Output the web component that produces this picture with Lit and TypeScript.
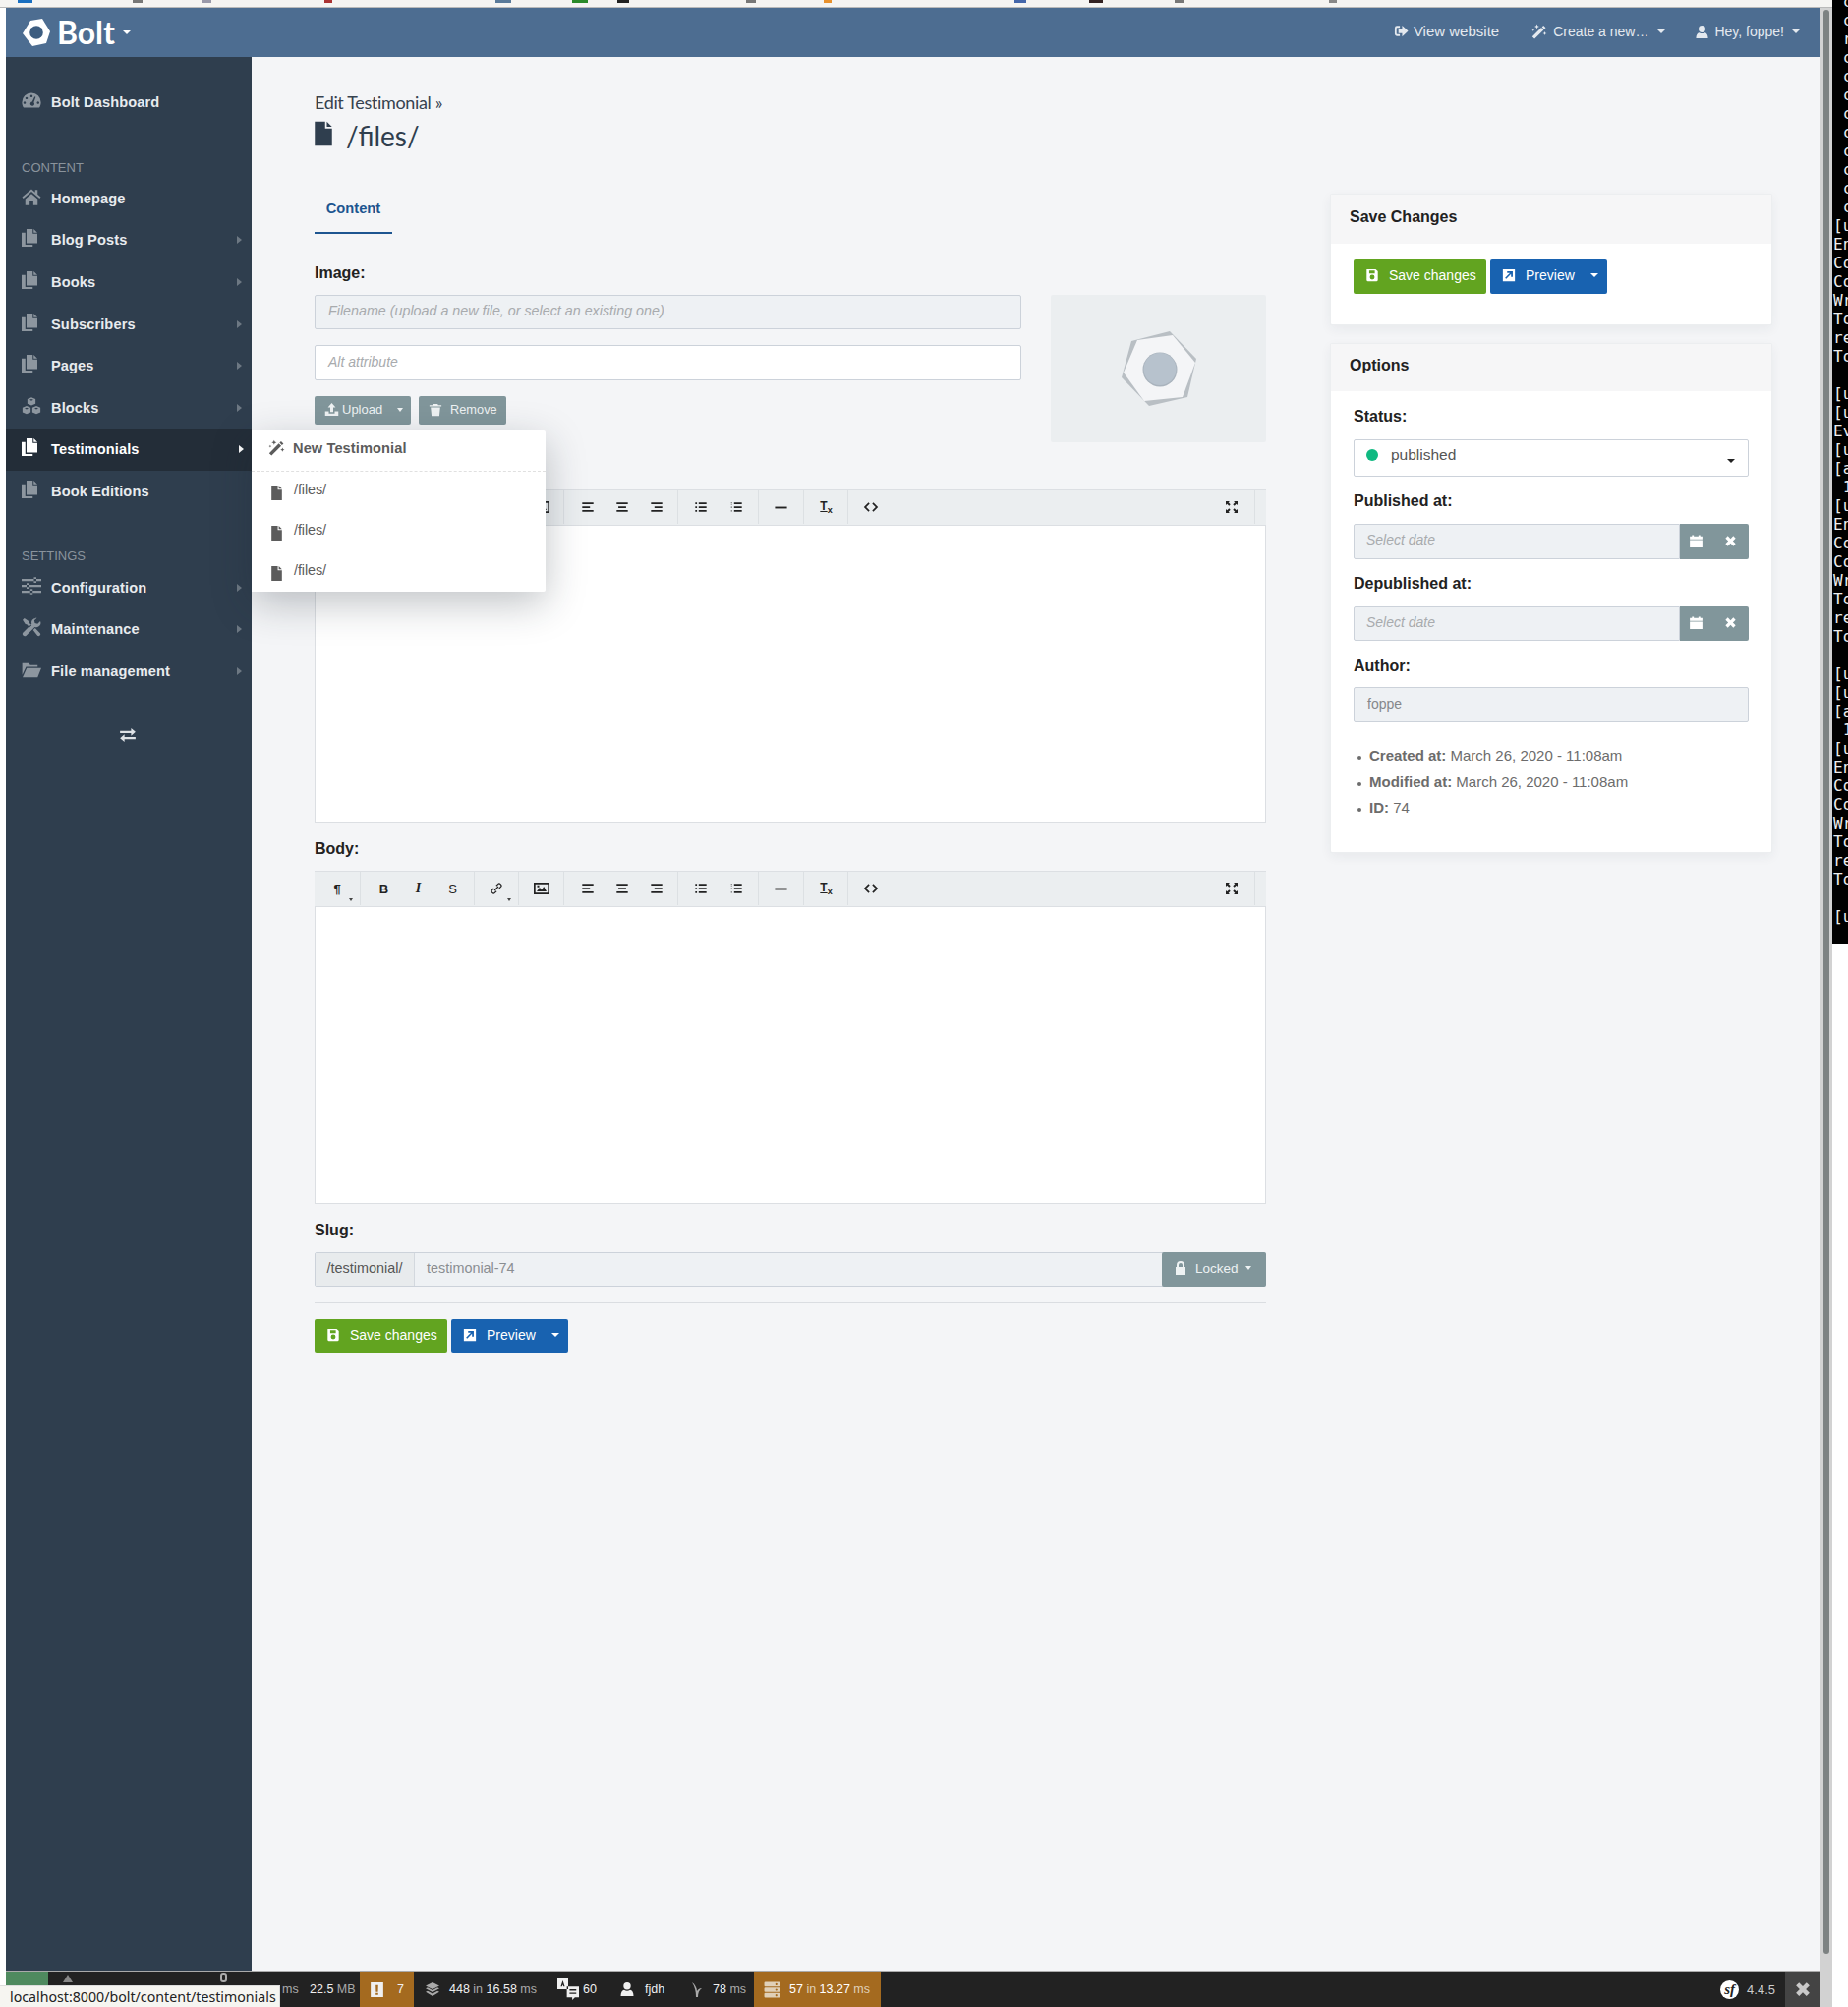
import { LitElement, html, css } from "lit";
import { customElement } from "lit/decorators.js";

const P: Record<string, string> = {
  file: "M3 1h6v4h4v10H3z M10 1l3 3h-3z",
  files: "M4 .8h5v3.700h3.800V12.400H4z M9.800 .8l3 3h-3z M0 3.700h3v9.800h6v1.700H0z",
  dash: "M8 2a7.7 7.7 0 0 0-7.700 7.700c0 1.600.5 3 1.300 4.300h12.800c.8-1.300 1.300-2.700 1.300-4.300A7.700 7.700 0 0 0 8 2z M8 3.600a1 1 0 1 0 .01 0z M4 5.300a1 1 0 1 0 .01 0z M2.400 9a1 1 0 1 0 .01 0z M13.400 9a1 1 0 1 0 .01 0z M10.600 5l-2 4.200a1.700 1.700 0 1 0 1.300.5l1.600-4.400z",
  home: "M8 2 .4 8.400l1 1.100L8 4l6.600 5.500 1-1.100L13 6.200V2.500h-2v2zM3 10l5-4.200 5 4.200v5H9.500v-3.600h-3V15H3z",
  cubes: "M8 1l3.300 1.300v3.900L8 7.600 4.700 6.200V2.300z M4 8l3.300 1.300v3.900L4 14.600.7 13.200V9.300z M12 8l3.300 1.300v3.900L12 14.600l-3.300-1.400V9.300z M8 2.400 6.400 3 8 3.700 9.600 3z M4 9.400 2.400 10l1.600.7 1.600-.7z M12 9.400l-1.600.6 1.600.7 1.600-.7z",
  sliders: "M0 2.300h16v1.800H0z M0 7.100h16v1.800H0z M0 11.900h16v1.800H0z M10 1h2v4.500h-2z M4 5.800h2v4.500H4z M7 10.500h2V15H7z",
  folder: "M.5 3h5l1.500 1.500h6V6H3.600L.5 12.500z M4.200 7H16l-3 7.500H.8z",
  exchange: "M1 4.200h10V1.800L15 5.200l-4 3.400V6.200H1z M15 9.800H5V7.400L1 10.800l4 3.400v-2.400h10z",
  wand: "M.8 13.300l9.200-9.200 2.300 2.300-9.200 9.200z M10.700 3.400l1.500-1.500 2.300 2.300-1.500 1.500z M5.500 .6l.7 1.700 1.700.7-1.700.7-.7 1.700-.7-1.700L3.100 3l1.700-.7z M13.500 8l.6 1.400 1.400.6-1.400.6-.6 1.400-.6-1.400-1.400-.6 1.400-.6z M1.800 5.300l.4 1 1 .4-1 .4-.4 1-.4-1-1-.4 1-.4z",
  upload: "M8 1l4.200 4.800H9.600V11H6.400V5.800H3.800z M.8 10h4v2.500h6.400V10h4v5H.8z",
  trash: "M5.500 1h5l.7 1.500H15V4H1V2.500h3.800z M2.500 5h11l-1 10h-9z",
  save: "M1.500 1H12l2.500 2.500v10.200A1.300 1.300 0 0 1 13.200 15H2.800a1.300 1.300 0 0 1-1.300-1.300z M4.500 2.500V6H11V2.500z M5.200 10.200a2.800 2.800 0 1 0 5.600 0 2.800 2.800 0 1 0-5.600 0z",
  ext: "M1 1h14v14H1z M6 3.500v1.900h3.200L3.600 11l1.300 1.300 5.600-5.600V10h2V3.500z",
  lock: "M4 7V5a4 4 0 0 1 8 0v2h1v8H3V7z M6 7h4V5a2 2 0 0 0-4 0z",
  cal: "M1.200 3H3.500V1.500h2V3h5V1.500h2V3h2.300v3H1.200z M1.200 7h13.600v8H1.200z",
  times: "M2.500 5l2.500-2.500 3 3 3-3L13.500 5l-3 3 3 3-2.500 2.500-3-3-3 3L2.500 11l3-3z",
  user: "M8 1a3.700 3.700 0 1 1 0 7.400A3.700 3.700 0 0 1 8 1z M1.500 15c0-4 1.500-6 3.500-6.300 1.800 1.300 4.200 1.300 6 0 2 .3 3.500 2.300 3.500 6.300z",
  signout: "M6.500 2.500H3.200A2.200 2.200 0 0 0 1 4.700v6.600a2.200 2.200 0 0 0 2.200 2.200h3.300v-2H3.400a.5.5 0 0 1-.5-.5V5a.5.5 0 0 1 .5-.5h3.100z M9 2l6.500 6L9 14v-3.500H5v-5h4z",
  stack: "M8 1l7 3.500L8 8 1 4.500z M1 7.200l2-.9L8 9l5-2.700 2 .9L8 11z M1 10.700l2-.9 5 2.700 5-2.700 2 .9L8 15z",
  tools: "M11.500 .8a3.500 3.500 0 0 0-3.300 4.600L1 12.600a1.800 1.800 0 0 0 2.500 2.500l7.200-7.200a3.500 3.500 0 0 0 4.500-4.700l-2.200 2.100-2.200-.6-.5-2.100 2.100-2.100a3.500 3.500 0 0 0-.9-.1z M.8 2.200 2.200.8 5.500 3l.3 1.200 2.300 2.300-1.600 1.600-2.300-2.300-1.200-.3z M9.300 10.400l1.700-1.700 4 4.200a1.500 1.500 0 0 1-2.100 2.100z",
  full: "M2 2h4L4.700 3.300l2 2-1.400 1.400-2-2L2 6z M14 2v4l-1.300-1.300-2 2-1.400-1.400 2-2L10 2z M2 14v-4l1.300 1.300 2-2 1.400 1.400-2 2L6 14z M14 14h-4l1.300-1.300-2-2 1.400-1.400 2 2L14 10z",
  alignL: "M1.500 2.500h13v2h-13z M1.500 7h9v2h-9z M1.500 11.500h13v2h-13z",
  alignC: "M1.500 2.500h13v2h-13z M3.500 7h9v2h-9z M1.500 11.500h13v2h-13z",
  alignR: "M1.500 2.500h13v2h-13z M5.500 7h9v2h-9z M1.500 11.500h13v2h-13z",
  ul: "M1.500 2.500h2v2h-2z M1.500 7h2v2h-2z M1.500 11.500h2v2h-2z M5.500 2.500h9v2h-9z M5.500 7h9v2h-9z M5.500 11.500h9v2h-9z",
  ol: "M2 2.500h1v1H2z M2 4.300h1v.7H2z M2 7h1v.8H2z M2 8.400h1v.8H2z M2 11.400h1v.8H2z M2 13h1v.8H2z M5.500 2.500h9v2h-9z M5.500 7h9v2h-9z M5.500 11.500h9v2h-9z",
  hr: "M1.500 7h13v2h-13z",
  code: "M5.500 3.200l1.200 1.200L3.200 8l3.500 3.600-1.200 1.200L.8 8z M10.500 3.200 15.200 8l-4.700 4.800-1.200-1.200L12.800 8 9.300 4.400z",
  image: "M0 2h16v12H0z M1.700 3.700v8.600h12.600V3.700z M3 11l3-4 2 2.500L10.200 6 13 11z M3.500 4.800h2v2h-2z",
  link: "M9.300 2.500a2.700 2.700 0 0 1 3.900 0l.3.3a2.700 2.700 0 0 1 0 3.900L11.600 8.600l-1-1 1.900-1.900a1.300 1.300 0 0 0 0-1.900l-.3-.3a1.300 1.300 0 0 0-1.900 0L8.400 5.400l-1-1z M4.400 7.400l1 1-1.900 1.900a1.300 1.300 0 0 0 0 1.900l.3.3a1.300 1.300 0 0 0 1.900 0l1.900-1.900 1 1-1.900 1.900a2.700 2.700 0 0 1-3.900 0l-.3-.3a2.700 2.700 0 0 1 0-3.900z M9.800 5.200l1 1-4.600 4.600-1-1z",
  server: "M1.500 .5h13a1 1 0 0 1 1 1V4a1 1 0 0 1-1 1h-13a1 1 0 0 1-1-1V1.500a1 1 0 0 1 1-1z M1.500 5.900h13a1 1 0 0 1 1 1v2.300a1 1 0 0 1-1 1h-13a1 1 0 0 1-1-1V6.900a1 1 0 0 1 1-1z M1.500 11.100h13a1 1 0 0 1 1 1v2.400a1 1 0 0 1-1 1h-13a1 1 0 0 1-1-1v-2.400a1 1 0 0 1 1-1z M12 1.700a1 1 0 1 0 .01 0z M12 7a1 1 0 1 0 .01 0z M12 12.300a1 1 0 1 0 .01 0z",
  translate: "M0 0h8v8H0z M2.500 6l1.500-4.500L5.500 6h-1L4 4.500 3.500 6z M7 6h9v8h-3l-2 2v-2H7z M9 8v1h5V8z M9 10.500v1h5v-1z",
  route: "M8 16c0-6-1-10-4-15 3 2 5 6 5 9 1-2 3-3 5-3-3 2-4 5-4 9z",
  warn: "M2 1h12v14H2z M6.800 3.500h2.400L9 10H7z M6.800 11h2.400v2H6.800z",
};

function ic(name: string, size = 16, cls = "") {
  return html`<svg class="i ${cls}" width=${size} height=${size} viewBox="0 0 16 16" aria-hidden="true"><path fill="currentColor" fill-rule="evenodd" d=${P[name]}></path></svg>`;
}

const termLines = [
  " c"," c"," r"," c"," c"," c"," c"," c"," c"," c"," c"," c",
  "[u","En","Co","Co","Wr","To","re","To","",
  "[u","[u","Ev","[u","[a"," 1","[u","En","Co","Co","Wr","To","re","To","",
  "[u","[u","[a"," 1","[u","En","Co","Co","Wr","To","re","To","","[u",
];

const topBits: [number, number, string][] = [
  [18, 15, "#1a6fc0"], [135, 10, "#777"], [205, 10, "#99a"], [330, 8, "#a33"],
  [504, 16, "#5a7a9a"], [582, 16, "#2a8a2a"], [628, 12, "#222"], [759, 10, "#777"],
  [838, 8, "#e8912d"], [1032, 12, "#4466aa"], [1108, 14, "#332222"], [1195, 10, "#777"], [1352, 8, "#888"],
];

const nav: [string, string, boolean, boolean][] = [
  ["home", "Homepage", false, false],
  ["files", "Blog Posts", true, false],
  ["files", "Books", true, false],
  ["files", "Subscribers", true, false],
  ["files", "Pages", true, false],
  ["cubes", "Blocks", true, false],
  ["files", "Testimonials", true, true],
  ["files", "Book Editions", false, false],
];
const nav2: [string, string, boolean, boolean][] = [
  ["sliders", "Configuration", true, false],
  ["tools", "Maintenance", true, false],
  ["folder", "File management", true, false],
];

@customElement("app-root")
export class AppRoot extends LitElement {
  static styles = css`
    :host { display: block; width: 1880px; height: 2042px; overflow: hidden; background: #fff; font-family: "Liberation Sans", Arial, sans-serif; color: #222; }
    * { box-sizing: border-box; }
    .i { display: block; flex: none; }
    .root { display: flex; height: 2042px; }
    .left { width: 1864px; display: flex; flex-direction: column; }
    .strip { height: 8px; flex: none; background: #f5f4f2; border-bottom: 1px solid #b9b9b9; position: relative; overflow: hidden; }
    .bit { position: absolute; top: 0; height: 3px; }
    .row { flex: 1; display: flex; min-height: 0; }
    .gutter { width: 6px; flex: none; }
    .center { width: 1846px; display: flex; flex-direction: column; }
    .track { width: 12px; flex: none; background: #d2d2d2; padding: 2px 3px 0; }
    .thumb { height: 1978px; background: #7d8282; border-radius: 3px; }
    .term { width: 16px; height: 960px; background: #000; color: #eee; font: 16px/19px "DejaVu Sans Mono", monospace; padding: 0 0 0 1px; overflow: hidden; white-space: pre; flex: none; }
    .term-in { margin-top: -8px; }
    .tl { height: 19px; }

    .navbar { height: 50px; flex: none; background: #4d6d91; display: flex; align-items: center; padding: 0 21px 0 17px; color: #e4e9ef; font-size: 14px; }
    .logo { display: flex; align-items: center; color: #fff; }
    .logo svg { margin-right: 7px; }
    .logotext { font: 700 32px/40px Lato, sans-serif; letter-spacing: -0.1px; }
    .caret { width: 0; height: 0; border-left: 4px solid transparent; border-right: 4px solid transparent; border-top: 4px solid currentColor; flex: none; }
    .logo .caret { margin-left: 8px; }
    .navr { margin-left: auto; display: flex; align-items: center; margin-top: -2px; }
    .nl { display: flex; align-items: center; gap: 5px; }
    .nl.a { margin-right: 33px; margin-top: -2px; font-size: 15px; }
    .nl.b { margin-right: 30px; gap: 6px; }
    .nl .caret { margin-left: 3px; }

    .body { flex: 1; display: flex; min-height: 0; background: #f4f5f7; }
    .side { width: 250px; flex: none; background: #2f3e4e; padding-top: 25px; color: #e8ebee; }
    .si { height: 42.600px; display: flex; align-items: center; padding: 0 10px 0 16px; font-size: 14.600px; font-weight: 700; letter-spacing: 0.12px; position: relative; }
    .si .ii { width: 30px; color: #8d969f; margin-top: -4px; }
    .si.on { background: #232d38; color: #fff; }
    .si.on .ii { color: #fff; }
    .arrow { width: 0; height: 0; margin-left: auto; border-top: 4.500px solid transparent; border-bottom: 4.500px solid transparent; border-left: 5px solid #6d7883; }
    .si.on .arrow { border-left-color: #fff; margin-right: -2px; }
    .sh { height: 20px; line-height: 20px; padding-left: 16px; font-size: 13px; color: #8a939c; }
    .sh.c { margin-top: 35px; margin-bottom: 0; }
    .sh.s { margin-top: 35px; margin-bottom: 0; }
    .swap { display: flex; justify-content: center; margin-top: 35px; color: #dfe3e7; padding-right: 3px; }

    .main { flex: 1; display: flex; padding: 36px 0 0 64px; position: relative; min-width: 0; }
    .col { width: 968px; flex: none; }
    .crumb { font: 400 18px/20px Lato, sans-serif; color: #36424f; letter-spacing: -0.35px; }
    .title { display: flex; align-items: center; height: 40px; margin-top: 4px; font: 400 28px/40px Lato, sans-serif; color: #2f3e4e; gap: 9px; }
    .title .i { margin-left: -5px; margin-top: -4px; }
    .tabs { margin-top: 30px; }
    .tab { width: 79px; height: 50px; text-align: center; line-height: 48px; font-weight: 700; font-size: 14.700px; color: #1d5590; border-bottom: 2px solid #1d5590; }
    .lb { display: block; height: 20px; line-height: 20px; font-size: 16px; font-weight: 700; color: #222; }
    .imglb { margin-top: 30px; }
    .imgrow { margin-top: 12px; display: flex; gap: 30px; }
    .imgl { width: 719px; flex: none; display: flex; flex-direction: column; }
    .imgp { width: 219px; height: 150px; background: #ebeef0; border-radius: 2px; display: flex; align-items: center; justify-content: center; }
    .inp { height: 35px; border: 1px solid #ccd2da; border-radius: 2px; background: #eef1f4; padding: 0 13px 3px; display: flex; align-items: center; font-size: 14.300px; color: #999; }
    .inp.ph { font-style: italic; color: #a8abae; }
    .inp.w { background: #fff; height: 36px; margin-top: 16px; font-size: 14px; }
    .btns { display: flex; gap: 8px; margin-top: 16px; }
    .btn { display: flex; align-items: center; color: #fff; border-radius: 2px; font-size: 14px; }
    .grey { background: #81969b; color: #eef2f3; }
    .green { background: #62a420; }
    .blue { background: #1862b0; }
    .up { width: 98px; height: 29px; padding: 0 0 2px 10px; font-size: 13px; gap: 3px; }
    .up .caret { margin-left: 12px; border-width: 4px 3.500px 0; }
    .rm { width: 89px; height: 29px; padding: 0 0 2px 10px; font-size: 12.800px; gap: 8px; }
    .edlb { margin-top: 15px; margin-bottom: 13px; }
    .ed { border: 1px solid #dcdfe3; height: 339px; background: #fff; display: flex; flex-direction: column; }
    .ed.two { height: 339px; }
    .bar { height: 37px; flex: none; background: #ebeef0; border-bottom: 1px solid #dcdfe3; display: flex; margin: -1px -1px 0 -1px; border-top: 1px solid #dcdfe3; color: #222; }
    .grp { display: flex; align-items: center; border-right: 1px solid #dce0e3; height: 34px; flex: none; position: relative; }
    .grp.none { border-right: 0; }
    .g { display: flex; align-items: center; justify-content: center; flex: none; position: relative; height: 34px; font-size: 13px; }
    .sm { position: absolute; bottom: 4px; right: 7px; width: 0; height: 0; border-left: 2.500px solid transparent; border-right: 2.500px solid transparent; border-top: 3px solid #444; }
    .tb { font-weight: 700; font-size: 13px; }
    .ti { font-style: italic; font-size: 14px; font-family: "Liberation Serif", serif; font-weight: 700; }
    .ts { text-decoration: line-through; font-size: 13px; }
    .tx { font-size: 12px; text-decoration: underline; font-weight: 700; margin-left: 1px; }
    .tx small { font-size: 9px; vertical-align: -3px; text-decoration: none; display: inline-block; }
    .bodylb { margin-top: 17px; margin-bottom: 12px; }
    .sluglb { margin-top: 17px; margin-bottom: 12px; }
    .slug { height: 35px; display: flex; border: 1px solid #ccd2da; border-radius: 2px; background: #eef1f4; font-size: 14.400px; color: #8a8e92; position: relative; }
    .addon { width: 101px; flex: none; background: #e8ebed; border-right: 1px solid #d3d8de; display: flex; align-items: center; justify-content: center; color: #555; padding-bottom: 3px; }
    .slugv { flex: 1; display: flex; align-items: center; padding: 0 0 3px 12px; }
    .lockb { width: 106px; flex: none; margin: -1px -1px -1px 0; gap: 7px; padding: 0 0 3px 11px; font-size: 13.500px; }
    .lockb .caret { margin-left: 0; border-width: 4px 3.500px 0; }
    .hr { height: 1px; background: #dadde1; margin-top: 16px; }
    .act { display: flex; gap: 4px; margin-top: 16px; }
    .bs { width: 135px; height: 35px; padding: 0 0 3px 12px; gap: 10px; }
    .bp { width: 119px; height: 35px; padding: 0 0 3px 12px; gap: 10px; }
    .bp .caret { margin-left: 6px; border-width: 4px 4px 0; }

    .aside { width: 450px; flex: none; margin: 103px 0 0 65px; display: flex; flex-direction: column; gap: 18px; align-self: flex-start; }
    .panel { background: #fff; border: 1px solid #eceef0; border-radius: 2px; box-shadow: 0 4px 12px rgba(40,50,60,.06); }
    .ph1 { height: 50px; background: #f6f6f7; padding: 0 0 4px 19px; display: flex; align-items: center; font-size: 16px; font-weight: 700; color: #222; }
    .ph2 { height: 48px; }
    .pb1 { padding: 16px 23px; height: 82px; display: flex; gap: 4px; }
    .pb2 { padding: 16px 23px 32px; }
    .sel { height: 38px; margin-top: 13px; border: 1px solid #ccd2da; border-radius: 2px; display: flex; align-items: center; padding: 0 12px 6px; font-size: 15.500px; color: #555; }
    .dot { width: 12px; height: 12px; border-radius: 50%; background: #10b981; margin-right: 13px; }
    .sel .caret { margin-left: auto; margin-right: 1px; margin-top: 11px; color: #222; border-width: 4.500px 4px 0; }
    .f2 { margin-top: 15px; }
    .f3 { margin-top: 16px; }
    .grpi { display: flex; height: 36px; margin-top: 13px; }
    .grpi.d { height: 35px; }
    .grpi .inp { flex: 1; height: auto; padding: 0 12px 4px; border-radius: 2px 0 0 2px; font-size: 14px; }
    .ga { width: 70px; flex: none; background: #81969b; border-radius: 0 2px 2px 0; display: flex; align-items: center; color: #fff; padding-left: 9px; gap: 20px; padding-bottom: 2px; }
    .auth { margin-top: 11px; height: 36px; padding-bottom: 2px; color: #85888b; font-size: 14px; }
    .meta { list-style: none; margin: 21px 0 0; padding: 0; font-size: 15px; color: #6c6c6c; }
    .meta li { height: 26.500px; line-height: 26.500px; padding-left: 16px; position: relative; }
    .meta li::before { content: ""; position: absolute; left: 4px; top: 13px; width: 4px; height: 4px; border-radius: 50%; background: #6c6c6c; }
    .pb2 { padding-bottom: 31px; }

    .menu { position: absolute; left: 0; top: 380px; width: 299px; height: 164px; background: #fff; border-radius: 0 2px 2px 0; box-shadow: 0 12px 40px rgba(30,40,50,.28); color: #5c5c5c; }
    .mh { height: 42px; border-bottom: 1px dashed #e0e0e0; display: flex; align-items: center; font-weight: 700; font-size: 14.600px; padding: 0 0 6px 17px; gap: 8px; letter-spacing: .1px; }
    .mi { height: 41px; display: flex; align-items: flex-start; padding: 10px 0 0 17px; gap: 9px; font-size: 14.400px; letter-spacing: -.1px; }
    .mi .i { margin-top: 3px; margin-left: 0; }

    .foot { height: 37px; flex: none; background: #222; border-top: 1px solid #aaa; color: #f0f0f0; font-size: 12.500px; display: flex; align-items: stretch; position: relative; }
    .fi { display: flex; align-items: center; flex: none; gap: 10px; white-space: pre; }
    .fi span.m, .m { color: #aaa; }
    .gb { width: 43px; background: #4f8a5f; height: 16px; }
    .orange { background: #a46a1f; }
    .tip { position: absolute; left: -6px; top: 14px; width: 285px; height: 23px; background: #f6f5f1; border: 1px solid #ddd; border-left: 0; color: #222; font: 14.200px/21px "Noto Sans", sans-serif; padding-left: 10px; white-space: nowrap; overflow: hidden; }
    .frag1 { position: absolute; left: 58px; top: 3px; width: 0; height: 0; border-left: 5px solid transparent; border-right: 5px solid transparent; border-bottom: 8px solid #888; }
    .frag2 { position: absolute; left: 218px; top: 1px; width: 7px; height: 10px; border: 2px solid #aaa; border-radius: 3px; }
    .fspace { flex: 1; }
    .sf { width: 19px; height: 19px; border-radius: 50%; background: #fff; color: #222; font: italic 700 15px/19px "Liberation Serif", serif; text-align: center; }
    .close { width: 36px; background: #444; display: flex; align-items: center; justify-content: center; color: #c9c9c9; flex: none; }
  `;

  private toolbar() {
    const g = (w: number, c: unknown) => html`<div class="g" style="width:${w}px">${c}</div>`;
    return html`<div class="bar">
      <div class="grp" style="width:47px">${g(46, html`<span class="tb">¶</span><span class="sm"></span>`)}</div>
      <div class="grp" style="width:116px;padding-left:6px">${g(35, html`<span class="tb">B</span>`)}${g(35, html`<span class="ti">I</span>`)}${g(35, html`<span class="ts">S</span>`)}</div>
      <div class="grp" style="width:45px">${g(44, html`${ic("link", 14)}<span class="sm"></span>`)}</div>
      <div class="grp" style="width:46px">${g(45, ic("image", 16))}</div>
      <div class="grp" style="width:116px;padding-left:6px">${g(35, ic("alignL", 14))}${g(35, ic("alignC", 14))}${g(35, ic("alignR", 14))}</div>
      <div class="grp" style="width:82px;padding-left:5px">${g(36, ic("ul", 14))}${g(36, ic("ol", 14))}</div>
      <div class="grp" style="width:46px">${g(45, ic("hr", 15))}</div>
      <div class="grp" style="width:45px">${g(44, html`<span class="tx">T<small>x</small></span>`)}</div>
      <div class="grp none" style="width:46px">${g(46, ic("code", 16))}</div>
      <div class="grp" style="width:368px;justify-content:flex-end">${g(46, ic("full", 16))}</div>
    </div>`;
  }

  private actions() {
    return html`
      <div class="btn green bs">${ic("save", 14)}<span>Save changes</span></div>
      <div class="btn blue bp">${ic("ext", 14)}<span>Preview</span><span class="caret"></span></div>`;
  }

  render() {
    const item = (n: [string, string, boolean, boolean]) => html`
      <div class="si ${n[3] ? "on" : ""}"><span class="ii">${ic(n[0], 20)}</span><span>${n[1]}</span>${n[2] ? html`<span class="arrow"></span>` : ""}</div>`;
    return html`
      <div class="root">
        <div class="left">
          <div class="strip">${topBits.map(b => html`<span class="bit" style="left:${b[0]}px;width:${b[1]}px;background:${b[2]}"></span>`)}</div>
          <div class="row">
            <div class="gutter"></div>
            <div class="center">
              <div class="navbar">
                <div class="logo">
                  <svg width="28" height="28" viewBox="0 0 28 28" aria-hidden="true"><polygon points="8,2 20,0 28,13 24,25 10,28 0,15" fill="#fff"></polygon><circle cx="14" cy="14" r="6.800" fill="#3d5d80"></circle></svg>
                  <span class="logotext">Bolt</span><span class="caret"></span>
                </div>
                <div class="navr">
                  <div class="nl a">${ic("signout", 15)}<span>View website</span></div>
                  <div class="nl b">${ic("wand", 16)}<span>Create a new…</span><span class="caret"></span></div>
                  <div class="nl">${ic("user", 15)}<span>Hey, foppe!</span><span class="caret"></span></div>
                </div>
              </div>
              <div class="body">
                <div class="side">
                  ${item(["dash", "Bolt Dashboard", false, false])}
                  <div class="sh c">CONTENT</div>
                  ${nav.map(item)}
                  <div class="sh s">SETTINGS</div>
                  ${nav2.map(item)}
                  <div class="swap">${ic("exchange", 18)}</div>
                </div>
                <div class="main">
                  <div class="col">
                    <div class="crumb">Edit Testimonial »</div>
                    <div class="title">${ic("file", 28)}<span>/files/</span></div>
                    <div class="tabs"><div class="tab">Content</div></div>
                    <label class="lb imglb">Image:</label>
                    <div class="imgrow">
                      <div class="imgl">
                        <div class="inp ph">Filename (upload a new file, or select an existing one)</div>
                        <div class="inp ph w">Alt attribute</div>
                        <div class="btns">
                          <div class="btn grey up">${ic("upload", 15)}<span>Upload</span><span class="caret"></span></div>
                          <div class="btn grey rm">${ic("trash", 14)}<span>Remove</span></div>
                        </div>
                      </div>
                      <div class="imgp">
                        <svg width="76" height="76" viewBox="0 0 76 76" aria-hidden="true">
                          <polygon points="49,0 76,28 67,67 28,76 0,47 10,10" fill="#b9bfc4"></polygon>
                          <polygon points="16,9 52,4 75,32 62,67 23,71 2,42" fill="#f4f5f7"></polygon>
                          <circle cx="39" cy="39" r="17.500" fill="#a9b3bd"></circle>
                          <circle cx="39" cy="38.500" r="16.500" fill="#b7c2cd"></circle>
                        </svg>
                      </div>
                    </div>
                    <label class="lb edlb">Teaser:</label>
                    <div class="ed">${this.toolbar()}</div>
                    <label class="lb bodylb">Body:</label>
                    <div class="ed two">${this.toolbar()}</div>
                    <label class="lb sluglb">Slug:</label>
                    <div class="slug">
                      <div class="addon">/testimonial/</div>
                      <div class="slugv">testimonial-74</div>
                      <div class="btn grey lockb">${ic("lock", 16)}<span>Locked</span><span class="caret"></span></div>
                    </div>
                    <div class="hr"></div>
                    <div class="act">${this.actions()}</div>
                  </div>
                  <div class="aside">
                    <div class="panel">
                      <div class="ph1">Save Changes</div>
                      <div class="pb1">${this.actions()}</div>
                    </div>
                    <div class="panel">
                      <div class="ph1 ph2">Options</div>
                      <div class="pb2">
                        <label class="lb">Status:</label>
                        <div class="sel"><span class="dot"></span><span>published</span><span class="caret"></span></div>
                        <label class="lb f2">Published at:</label>
                        <div class="grpi"><div class="inp ph">Select date</div><div class="ga">${ic("cal", 15)}${ic("times", 15)}</div></div>
                        <label class="lb f2">Depublished at:</label>
                        <div class="grpi d"><div class="inp ph">Select date</div><div class="ga">${ic("cal", 15)}${ic("times", 15)}</div></div>
                        <label class="lb f3">Author:</label>
                        <div class="inp auth">foppe</div>
                        <ul class="meta">
                          <li><b>Created at:</b> March 26, 2020 - 11:08am</li>
                          <li><b>Modified at:</b> March 26, 2020 - 11:08am</li>
                          <li><b>ID:</b> 74</li>
                        </ul>
                      </div>
                    </div>
                  </div>
                  <div class="menu">
                    <div class="mh">${ic("wand", 17)}<span>New Testimonial</span></div>
                    <div class="mi">${ic("file", 17)}<span>/files/</span></div>
                    <div class="mi">${ic("file", 17)}<span>/files/</span></div>
                    <div class="mi">${ic("file", 17)}<span>/files/</span></div>
                  </div>
                </div>
              </div>
              <div class="foot">
                <div class="fi"><div class="gb" style="align-self:flex-start"></div></div>
                <div class="fi m" style="margin-left:238px;width:28px">ms</div>
                <div class="fi" style="width:51px;gap:0">22.5 <span class="m">MB</span></div>
                <div class="fi orange" style="width:55px;padding-left:9px;gap:12px">${ic("warn", 17)}<span>7</span></div>
                <div class="fi m" style="margin-left:11px;width:135px;gap:9px">${ic("stack", 16)}<span><span style="color:#f0f0f0">448</span> in <span style="color:#f0f0f0">16.58</span> ms</span></div>
                <div class="fi" style="width:63px;gap:4px">${ic("translate", 22)}<span>60</span></div>
                <div class="fi" style="width:70px">${ic("user", 16)}<span>fjdh</span></div>
                <div class="fi m" style="width:67px;gap:9px">${ic("route", 16)}<span><span style="color:#f0f0f0">78</span> ms</span></div>
                <div class="fi orange" style="width:129px;padding-left:10px;gap:9px;color:#e0d0b8">${ic("server", 17)}<span><span style="color:#fff">57</span> in <span style="color:#fff">13.27</span> ms</span></div>
                <div class="fspace"></div>
                <div class="fi" style="margin-right:10px;gap:8px"><div class="sf">sf</div><span style="font-size:13px;color:#ccc">4.4.5</span></div>
                <div class="close">${ic("times", 20)}</div>
                <span class="frag1"></span><span class="frag2"></span>
                <div class="tip">localhost:8000/bolt/content/testimonials</div>
              </div>
            </div>
            <div class="track"><div class="thumb"></div></div>
          </div>
        </div>
        <div class="term"><div class="term-in">${termLines.map(l => html`<div class="tl">${l}</div>`)}</div></div>
      </div>
    `;
  }
}
